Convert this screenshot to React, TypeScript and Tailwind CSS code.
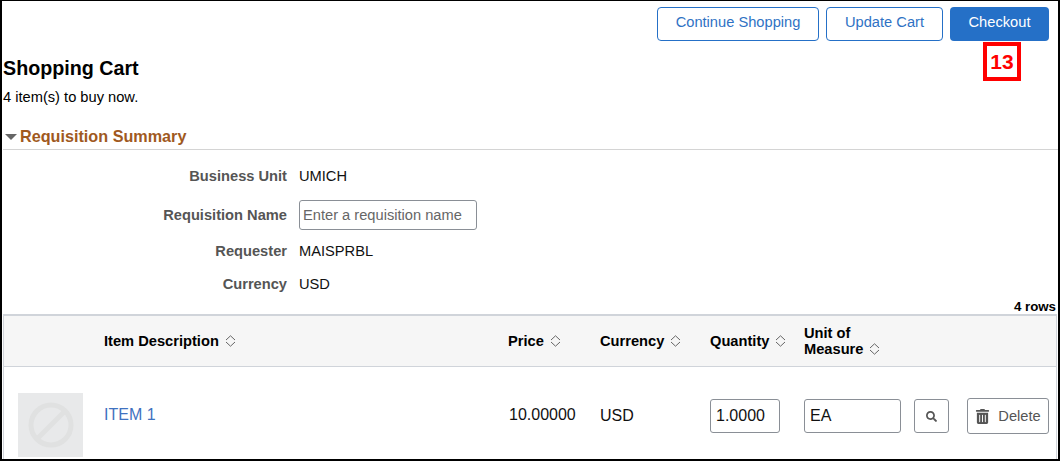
import { FaSearch, FaTrashAlt } from 'react-icons/fa';

function SortIcon() {
    return (
        <svg width="11" height="12" viewBox="0 0 11 12" fill="none" stroke="#666" strokeWidth="1" className="ml-[6px] shrink-0">
            <path d="M1 5 L5.5 0.8 L10 5" />
            <path d="M1 7 L5.5 11.2 L10 7" />
        </svg>
    );
}

function SummaryRow({ label, value, className }: { label: string; value: string; className: string }) {
    return (
        <div className={`flex items-center ${className}`}>
            <div className="w-[285px] text-right font-bold text-[#555]">{label}</div>
            <div className="ml-[12px] text-[#111]">{value}</div>
        </div>
    );
}

export default function App() {
    return (
        <div className="relative w-[1060px] h-[461px] overflow-hidden bg-white border-t border-l-2 border-r-2 border-b-2 border-black font-['Liberation_Sans',Arial,sans-serif] text-[14.67px] leading-[17px] text-black">
            <div className="flex justify-end gap-[7px] pt-[6px] pr-[9px]">
                <button className="w-[162px] h-[34px] pb-[3px] rounded-[4px] border border-[#2570c7] text-[#2f72c4]">Continue Shopping</button>
                <button className="w-[117px] h-[34px] pb-[3px] rounded-[4px] border border-[#2570c7] text-[#2f72c4]">Update Cart</button>
                <button className="w-[99px] h-[34px] pb-[3px] rounded-[4px] bg-[#2570c7] text-white">Checkout</button>
            </div>

            <div className="absolute left-[981px] top-[41px] w-[38px] h-[39px] border-[4px] border-[#ff0000] bg-white flex items-center justify-center text-[#ff0000] font-bold text-[21px] leading-none">13</div>

            <h1 className="ml-[1px] mt-[15px] text-[19.7px] leading-[24px] font-bold">Shopping Cart</h1>
            <p className="ml-[1px] mt-[9px]">4 item(s) to buy now.</p>

            <div className="ml-[1px] mt-[21px] h-[23px] border-b border-[#d4d4d4] flex items-start">
                <svg width="13" height="7" viewBox="0 0 13 7" className="ml-[2px] mt-[7px] shrink-0">
                    <path d="M0 0 H12 L6 6 Z" fill="#666" />
                </svg>
                <span className="ml-[2px] text-[16.2px] leading-[19px] font-bold text-[#a0591e]">Requisition Summary</span>
            </div>

            <SummaryRow label="Business Unit" value="UMICH" className="mt-[18px]" />
            <div className="flex items-center mt-[15px]">
                <div className="w-[285px] text-right font-bold text-[#555]">Requisition Name</div>
                <input
                    placeholder="Enter a requisition name"
                    className="ml-[12px] w-[178px] h-[30px] rounded-[3px] border border-[#8a8f96] px-[3px] text-[14.67px] placeholder:text-[#666] outline-none"
                />
            </div>
            <SummaryRow label="Requester" value="MAISPRBL" className="mt-[13px]" />
            <SummaryRow label="Currency" value="USD" className="mt-[16px]" />

            <div className="mt-[6px] pr-[2px] text-right text-[13.3px] leading-[15px] font-bold">4 rows</div>

            <div className="ml-[1px] mr-[1px] border-t-2 border-l border-r border-[#d0d4da]">
                <div className="flex items-center h-[51px] bg-[#f6f6f6] border-b border-[#d0d4da] font-bold">
                    <div className="w-[100px]" />
                    <div className="w-[404px] flex items-center">Item Description<SortIcon /></div>
                    <div className="w-[92px] flex items-center">Price<SortIcon /></div>
                    <div className="w-[110px] flex items-center">Currency<SortIcon /></div>
                    <div className="w-[94px] flex items-center">Quantity<SortIcon /></div>
                    <div className="flex flex-col leading-[16px]">
                        <span>Unit of</span>
                        <span className="flex items-center">Measure<SortIcon /></span>
                    </div>
                </div>
                <div className="flex items-start h-[100px]">
                    <div className="w-[100px] pl-[14px] pt-[26px]">
                        <div className="w-[65px] h-[64px] bg-[#e8e9ea] flex items-center justify-center">
                            <svg width="46" height="46" viewBox="0 0 46 46" fill="none" stroke="#e0e1e1" strokeWidth="5">
                                <circle cx="23" cy="23" r="20" />
                                <path d="M10 36 L36 10" />
                            </svg>
                        </div>
                    </div>
                    <div className="w-[404px] pt-[38px] text-[#3f72c0] text-[16px] leading-[19px]">ITEM 1</div>
                    <div className="w-[92px] pt-[38px] pl-[1px] text-[16px] leading-[19px] text-[#111]">10.00000</div>
                    <div className="w-[110px] pt-[39px] text-[16px] leading-[19px] text-[#111]">USD</div>
                    <div className="w-[94px] pt-[32px]">
                        <input defaultValue="1.0000" className="w-[70px] h-[34px] rounded-[3px] border border-[#8a8f96] px-[5px] text-[16px] text-[#111] outline-none" />
                    </div>
                    <div className="pt-[32px]">
                        <input defaultValue="EA" className="w-[97px] h-[34px] rounded-[3px] border border-[#8a8f96] px-[5px] text-[16px] text-[#111] outline-none" />
                    </div>
                    <div className="ml-[13px] pt-[32px]">
                        <button className="w-[35px] h-[34px] rounded-[3px] border border-[#8a8f96] flex items-center justify-center">
                            <FaSearch size={11} color="#555" />
                        </button>
                    </div>
                    <div className="ml-[18px] pt-[31px]">
                        <button className="w-[82px] h-[36px] rounded-[3px] border border-[#8a8f96] flex items-center justify-center gap-[8px] text-[#555]">
                            <FaTrashAlt size={15} color="#555" />
                            Delete
                        </button>
                    </div>
                </div>
            </div>
        </div>
    );
}
